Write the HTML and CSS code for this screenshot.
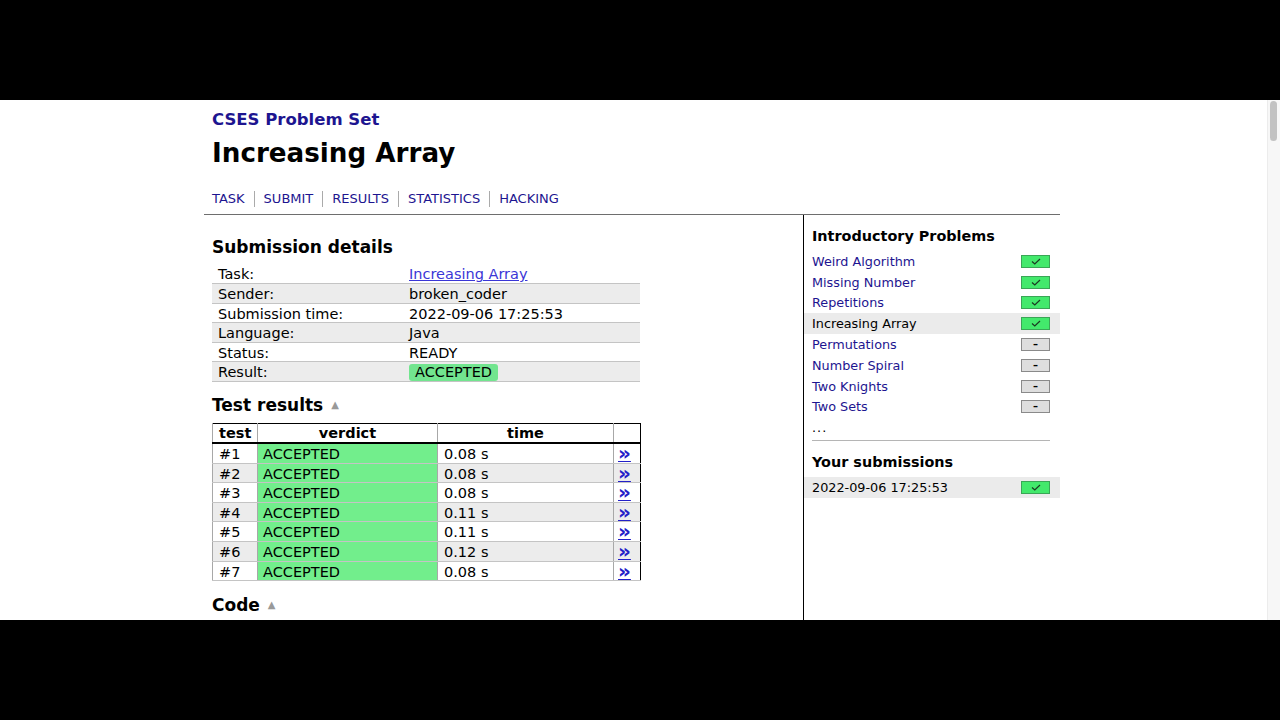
FILE: index.html
```html
<!DOCTYPE html>
<html>
<head>
<meta charset="utf-8">
<title>Increasing Array - CSES</title>
<link rel="stylesheet" href="styles.css">
</head>
<body>
<div class="video">
  <div class="blackbar"></div>
  <div class="screen">
    <div class="viewport">
      <div class="container">
        <header class="header">
          <div class="brand">CSES Problem Set</div>
          <h1 class="title">Increasing Array</h1>
          <nav class="nav">
            <a href="#">TASK</a><a href="#">SUBMIT</a><a href="#">RESULTS</a><a href="#">STATISTICS</a><a href="#">HACKING</a>
          </nav>
        </header>
        <div class="columns">
          <main class="main">
            <h2 class="heading first">Submission details</h2>
            <table class="details">
              <tr><td class="label">Task:</td><td><a class="tasklink" href="#">Increasing Array</a></td></tr>
              <tr class="alt"><td class="label">Sender:</td><td>broken_coder</td></tr>
              <tr><td class="label">Submission time:</td><td>2022-09-06 17:25:53</td></tr>
              <tr class="alt"><td class="label">Language:</td><td>Java</td></tr>
              <tr><td class="label">Status:</td><td>READY</td></tr>
              <tr class="alt"><td class="label">Result:</td><td><span class="verdict-badge">ACCEPTED</span></td></tr>
            </table>
            <h2 class="heading">Test results <span class="caret">▲</span></h2>
            <table class="tests">
              <tr><th class="c-test">test</th><th class="c-verdict">verdict</th><th class="c-time">time</th><th class="c-link"></th></tr>
              <tr><td>#1</td><td class="ac">ACCEPTED</td><td>0.08 s</td><td class="c-link"><a href="#">»</a></td></tr>
              <tr class="alt"><td>#2</td><td class="ac">ACCEPTED</td><td>0.08 s</td><td class="c-link"><a href="#">»</a></td></tr>
              <tr><td>#3</td><td class="ac">ACCEPTED</td><td>0.08 s</td><td class="c-link"><a href="#">»</a></td></tr>
              <tr class="alt"><td>#4</td><td class="ac">ACCEPTED</td><td>0.11 s</td><td class="c-link"><a href="#">»</a></td></tr>
              <tr><td>#5</td><td class="ac">ACCEPTED</td><td>0.11 s</td><td class="c-link"><a href="#">»</a></td></tr>
              <tr class="alt"><td>#6</td><td class="ac">ACCEPTED</td><td>0.12 s</td><td class="c-link"><a href="#">»</a></td></tr>
              <tr><td>#7</td><td class="ac">ACCEPTED</td><td>0.08 s</td><td class="c-link"><a href="#">»</a></td></tr>
            </table>
            <h2 class="heading code">Code <span class="caret">▲</span></h2>
          </main>
          <aside class="sidebar">
            <h3 class="side-title">Introductory Problems</h3>
            <ul class="tasks">
              <li><a href="#">Weird Algorithm</a><span class="score full"><svg class="check" viewBox="0 0 10 7" width="10" height="7"><polyline points="1,3.5 3.8,6 9,1" /></svg></span></li>
              <li><a href="#">Missing Number</a><span class="score full"><svg class="check" viewBox="0 0 10 7" width="10" height="7"><polyline points="1,3.5 3.8,6 9,1" /></svg></span></li>
              <li><a href="#">Repetitions</a><span class="score full"><svg class="check" viewBox="0 0 10 7" width="10" height="7"><polyline points="1,3.5 3.8,6 9,1" /></svg></span></li>
              <li class="current"><span>Increasing Array</span><span class="score full"><svg class="check" viewBox="0 0 10 7" width="10" height="7"><polyline points="1,3.5 3.8,6 9,1" /></svg></span></li>
              <li><a href="#">Permutations</a><span class="score none">–</span></li>
              <li><a href="#">Number Spiral</a><span class="score none">–</span></li>
              <li><a href="#">Two Knights</a><span class="score none">–</span></li>
              <li><a href="#">Two Sets</a><span class="score none">–</span></li>
              <li class="more">...</li>
            </ul>
            <hr class="side-rule">
            <h3 class="side-title subs">Your submissions</h3>
            <ul class="tasks">
              <li class="current"><span>2022-09-06 17:25:53</span><span class="score full"><svg class="check" viewBox="0 0 10 7" width="10" height="7"><polyline points="1,3.5 3.8,6 9,1" /></svg></span></li>
            </ul>
          </aside>
        </div>
      </div>
    </div>
    <div class="scrollbar"><div class="thumb"></div></div>
  </div>
  <div class="blackbar"></div>
</div>
</body>
</html>
```

FILE: styles.css
```css
* { box-sizing: border-box; }
html, body { margin: 0; padding: 0; background: #000; }
body { font-family: "DejaVu Sans", Verdana, sans-serif; font-size: 13px; color: #000; }

.video { width: 1280px; height: 720px; display: flex; flex-direction: column; }
.blackbar { height: 100px; background: #000; flex: none; }
.screen { height: 520px; flex: none; display: flex; background: #fff; overflow: hidden; }
.viewport { flex: 1; overflow: hidden; }
.scrollbar { width: 13px; flex: none; background: #f7f7f7; border-left: 1px solid #ececec; padding: 0 2px 0 2px; }
.thumb { width: 7px; height: 40px; margin-top: 1px; background: #c2c2c2; border-radius: 4px; }

.container { width: 856px; margin-left: 204px; }

.header { padding: 10px 8px 7px; border-bottom: 1px solid #6e6e6e; }
.brand { font-size: 16.5px; font-weight: bold; line-height: 20px; color: #1d1590; }
.title { margin: 7px 0 0; font-size: 26.2px; line-height: 32px; font-weight: bold; }
.nav { margin-top: 22px; line-height: 16px; display: flex; }
.nav a { color: #1d1590; text-decoration: none; padding: 0 9px; border-left: 1px solid #aaa; font-size: 13px; }
.nav a:first-child { padding-left: 0; border-left: none; }

.columns { display: flex; }
.main { width: 599px; flex: none; padding: 0 8px; }
.heading { font-size: 17px; line-height: 20px; font-weight: bold; margin: 13px 0 0; }
.heading.first { margin-top: 22px; }
.heading.code { margin-top: 14px; }
.caret { font-size: 10px; color: #999; vertical-align: 3px; margin-left: 2px; }

.details { width: 428px; border-collapse: collapse; margin-top: 7px; table-layout: fixed; font-size: 14.5px; }
.details td { padding: 3px 6px 0; line-height: 15.6px; height: 19.6px; border-bottom: 1px solid #c4c4c4; white-space: nowrap; }
.details td.label { width: 191px; }
.details tr.alt td { background: #ececec; }
.tasklink { color: #3a36d6; text-decoration: underline; }
.verdict-badge { display: inline-block; background: #72e58f; padding: 0 6px; border-radius: 3px; line-height: 17px; vertical-align: middle; margin-top: -2px; }

.tests { width: 428px; border-collapse: collapse; margin-top: 8px; border: 1px solid #000; table-layout: fixed; font-size: 14.5px; }
.tests th { font-weight: bold; line-height: 17px; padding: 1px 6px 0; border-left: 1px solid #a8a8a8; border-bottom: 2px solid #000; text-align: center; }
.tests th.c-test { text-align: left; }
.tests td { padding: 2px 6px 0; line-height: 16.6px; height: 19.6px; border-left: 1px solid #a8a8a8; border-bottom: 1px solid #c4c4c4; white-space: nowrap; }
.tests td.ac { background: #72ee8c; padding-left: 5px; }
.tests tr.alt td { background: #ececec; }
.tests tr.alt td.ac { background: #72ee8c; }
.c-test { width: 45px; }
.c-verdict { width: 180px; }
.c-time { width: 176px; }
.tests .c-link { width: 27px; padding: 0 4px; }
.tests .c-link a { display: inline-block; vertical-align: middle; color: #2320c8; font-weight: bold; font-size: 20px; line-height: 12px; height: 14px; text-decoration: underline; text-decoration-thickness: 1px; text-underline-offset: 1px; }

.sidebar { flex: 1; border-left: 1px solid #000; min-height: 420px; font-size: 12.8px; }
.side-title { font-size: 14.4px; line-height: 20px; font-weight: bold; margin: 11px 10px 5px 8px; }
.side-title.subs { margin-top: 11px; margin-bottom: 5px; }
.tasks { list-style: none; margin: 0; padding: 0; }
.tasks li { display: flex; justify-content: space-between; align-items: center; height: 20.8px; padding: 0 10px 0 8px; }
.tasks li a { color: #1d1590; text-decoration: none; }
.tasks li.current { background: #ebebeb; }
.tasks li.more { letter-spacing: 1px; }
.score { width: 29px; height: 13px; font-size: 12px; line-height: 11px; text-align: center; border: 1px solid; display: flex; align-items: center; justify-content: center; }
.score.full { background: #43e96c; border-color: #3aa656; }
.score.none { background: #dedede; border-color: #8a8a8a; font-weight: bold; font-size: 10px; }
.check { display: block; }
.check polyline { fill: none; stroke: #1b3a22; stroke-width: 1.2; }
.side-rule { margin: 2px 10px 0 8px; border: none; border-top: 1px solid #b5b5b5; height: 0; }
```
